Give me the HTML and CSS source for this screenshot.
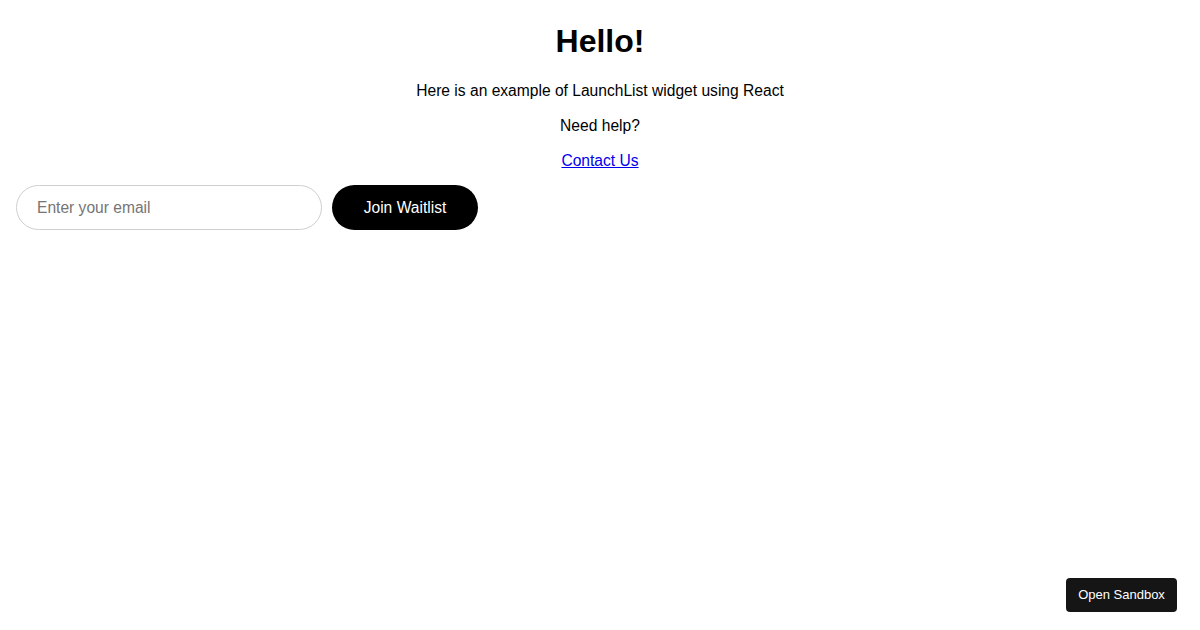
FILE: index.html
```html
<!DOCTYPE html>
<html>
<head>
<meta charset="utf-8">
<link rel="stylesheet" href="styles.css">
</head>
<body>
<div class="app">
  <h1 class="title">Hello!</h1>
  <p class="text">Here is an example of LaunchList widget using React</p>
  <p class="text">Need help?</p>
  <p class="text"><a class="link" href="#">Contact Us</a></p>
</div>
<form class="waitlist">
  <input class="email" type="email" placeholder="Enter your email">
  <button class="join" type="button">Join Waitlist</button>
</form>
<a class="sandbox" href="#">Open Sandbox</a>
</body>
</html>
```
FILE: styles.css
```css
body {
  margin: 8px;
  font-family: "Liberation Sans", Arial, sans-serif;
  color: #000;
  background: #fff;
}
.app {
  text-align: center;
}
.title {
  font-size: 32px;
  font-weight: bold;
  margin: 14.5px 0 21.44px;
}
.text {
  font-size: 15.6px;
  margin: 16px 0;
  line-height: 19px;
}
.link {
  color: #0000ee;
  text-decoration: underline;
}
.waitlist {
  display: flex;
  gap: 10px;
  margin-top: -0.5px;
  padding: 0 8px;
}
.email {
  box-sizing: border-box;
  width: 306px;
  height: 45px;
  border: 1px solid #cfcfcf;
  border-radius: 23px;
  padding: 0 20px;
  font-family: "Liberation Sans", Arial, sans-serif;
  font-size: 15.6px;
  outline: none;
}
.email::placeholder {
  color: #757575;
}
.join {
  box-sizing: border-box;
  height: 45px;
  width: 146px;
  border: none;
  border-radius: 23px;
  background: #000;
  color: #fff;
  font-family: "Liberation Sans", Arial, sans-serif;
  font-size: 15.6px;
  padding: 0;
  cursor: pointer;
}
.sandbox {
  position: fixed;
  right: 23px;
  bottom: 18px;
  width: 111px;
  height: 34px;
  box-sizing: border-box;
  padding-bottom: 2px;
  display: flex;
  align-items: center;
  justify-content: center;
  background: #151515;
  color: #fff;
  border-radius: 4px;
  font-size: 13px;
  text-decoration: none;
}
```
